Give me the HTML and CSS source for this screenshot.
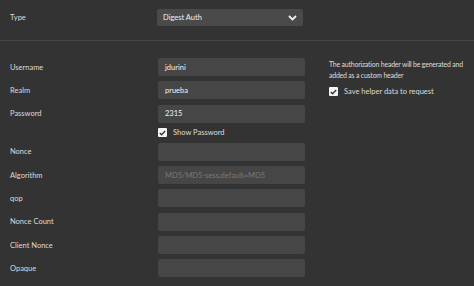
FILE: index.html
```html
<!DOCTYPE html>
<html>
<head>
<meta charset="utf-8">
<link rel="stylesheet" href="styles.css">
</head>
<body>
<div class="page">
  <div class="type-row">
    <div class="label">Type</div>
    <div class="select">
      <span>Digest Auth</span>
      <svg class="chev" width="9" height="6" viewBox="0 0 9 6"><path d="M1 1 L4.5 4.5 L8 1" fill="none" stroke="#f0f0f0" stroke-width="1.8"/></svg>
    </div>
  </div>
  <div class="divider"></div>
  <div class="form">
    <div class="fields">
      <div class="label">Username</div><div class="input">jdurini</div>
      <div class="label">Realm</div><div class="input">prueba</div>
      <div class="label">Password</div><div class="input">2315</div>
      <div></div>
      <div class="check-row">
        <span class="box"><svg width="7" height="6" viewBox="0 0 7 6"><path d="M0.8 3 L2.6 4.8 L6.2 1" fill="none" stroke="#333" stroke-width="1.3"/></svg></span>
        <span>Show Password</span>
      </div>
      <div class="label">Nonce</div><div class="input"></div>
      <div class="label">Algorithm</div><div class="input placeholder">MD5/MD5-sess,default=MD5</div>
      <div class="label">qop</div><div class="input"></div>
      <div class="label">Nonce Count</div><div class="input"></div>
      <div class="label">Client Nonce</div><div class="input"></div>
      <div class="label">Opaque</div><div class="input"></div>
    </div>
    <div class="side">
      <p class="note">The authorization header will be generated and<br>added as a custom header</p>
      <div class="check-row">
        <span class="box"><svg width="7" height="6" viewBox="0 0 7 6"><path d="M0.8 3 L2.6 4.8 L6.2 1" fill="none" stroke="#333" stroke-width="1.3"/></svg></span>
        <span>Save helper data to request</span>
      </div>
    </div>
  </div>
</div>
</body>
</html>
```
FILE: styles.css
```css
html, body {
  margin: 0;
  padding: 0;
  background: #333333;
}
.page {
  width: 474px;
  height: 286px;
  overflow: hidden;
  font-family: Lato, "Open Sans", sans-serif;
  font-size: 7.5px;
  color: #dcdcdc;
}
.type-row {
  display: flex;
  align-items: center;
  padding: 9px 0 0 10px;
  height: 17px;
}
.type-row .label {
  width: 147px;
}
.select {
  width: 146px;
  height: 17px;
  box-sizing: border-box;
  background: #4a4a4a;
  border-radius: 2px;
  display: flex;
  align-items: center;
  justify-content: space-between;
  padding: 0 6px 0 6px;
  color: #f0f0f0;
}
.divider {
  margin-top: 14px;
  height: 1px;
  background: #454545;
}
.form {
  display: flex;
  padding: 17px 0 0 10px;
}
.fields {
  display: grid;
  grid-template-columns: 148px 147px;
  grid-template-rows: 18px 18px 18px 9.7px;
  grid-auto-rows: 18px;
  row-gap: 5.3px;
  align-items: center;
}
.fields .check-row {
  height: 9.7px;
}
.input {
  height: 18px;
  box-sizing: border-box;
  background: #464646;
  border-radius: 2px;
  padding: 0 7px;
  display: flex;
  align-items: center;
  color: #f2f2f2;
}
.input.placeholder {
  color: #7a7a7a;
}
.check-row {
  display: flex;
  align-items: center;
  gap: 6px;
}
.box {
  width: 9px;
  height: 9px;
  background: #f4f4f4;
  border-radius: 1px;
  display: flex;
  align-items: center;
  justify-content: center;
  flex: none;
}
.side {
  margin-left: 24px;
  width: 140px;
  white-space: nowrap;
}
.note {
  margin: 0;
  line-height: 11px;
  font-size: 6.9px;
  letter-spacing: -0.18px;
  padding-top: 1px;
}
.side .check-row {
  margin-top: 6px;
}
```
